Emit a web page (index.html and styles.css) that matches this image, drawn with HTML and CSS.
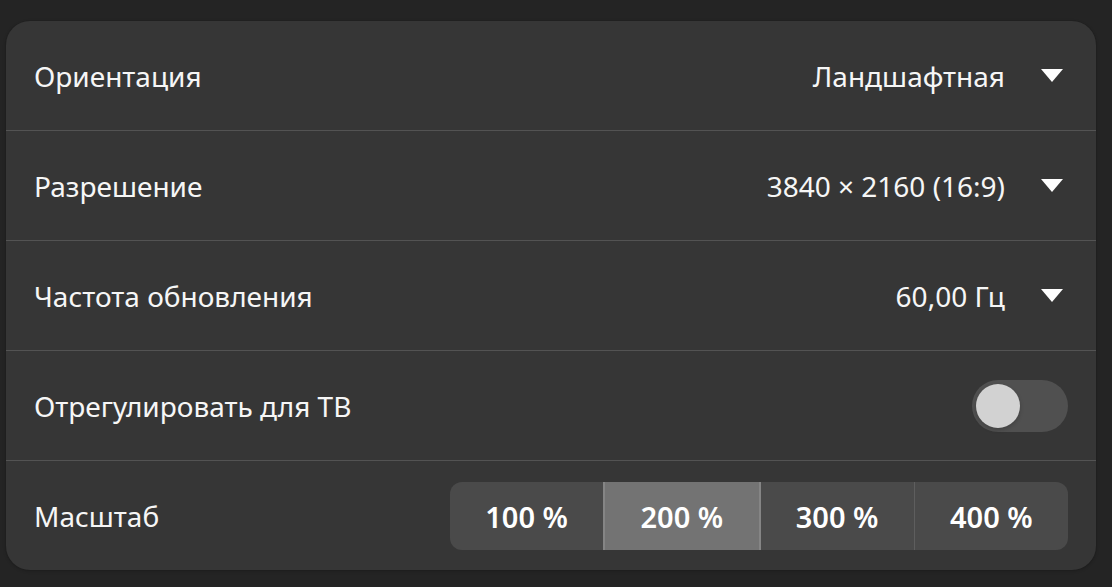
FILE: index.html
```html
<!DOCTYPE html>
<html lang="ru">
<head>
<meta charset="utf-8">
<title>Дисплей</title>
<link rel="stylesheet" href="styles.css">
</head>
<body>
<div class="page">
  <div class="card">
    <div class="row">
      <span class="label">Ориентация</span>
      <div class="combo">
        <span class="value">Ландшафтная</span>
        <svg class="arrow" width="22" height="13" viewBox="0 0 22 13"><path d="M0 0H22L11 13Z" fill="#fff"/></svg>
      </div>
    </div>
    <div class="row">
      <span class="label">Разрешение</span>
      <div class="combo">
        <span class="value">3840 × 2160 (16:9)</span>
        <svg class="arrow" width="22" height="13" viewBox="0 0 22 13"><path d="M0 0H22L11 13Z" fill="#fff"/></svg>
      </div>
    </div>
    <div class="row">
      <span class="label">Частота обновления</span>
      <div class="combo">
        <span class="value">60,00 Гц</span>
        <svg class="arrow" width="22" height="13" viewBox="0 0 22 13"><path d="M0 0H22L11 13Z" fill="#fff"/></svg>
      </div>
    </div>
    <div class="row">
      <span class="label">Отрегулировать для ТВ</span>
      <div class="switch"><div class="knob"></div></div>
    </div>
    <div class="row">
      <span class="label">Масштаб</span>
      <div class="segmented">
        <div class="seg">100 %</div>
        <div class="seg active">200 %</div>
        <div class="seg">300 %</div>
        <div class="seg">400 %</div>
      </div>
    </div>
  </div>
</div>
</body>
</html>
```

FILE: styles.css
```css
html, body {
  margin: 0;
  padding: 0;
  background: #242424;
}
body {
  font-family: "Noto Sans", "Open Sans", sans-serif;
  color: #ffffff;
}
.page {
  width: 1112px;
  height: 587px;
  box-sizing: border-box;
  padding: 21px 16px 0 6px;
}
.card {
  background: #363636;
  border-radius: 24px;
  box-shadow: 0 0 0 1px rgba(0,0,0,0.05), 0 1px 3px 1px rgba(0,0,0,0.12);
  overflow: hidden;
}
.row {
  height: 109px;
  display: flex;
  align-items: center;
  justify-content: space-between;
  padding: 0 28px 0 28px;
  border-top: 1px solid #535353;
}
.row:first-child {
  border-top: none;
}
.label {
  font-size: 28px;
  line-height: 1;
  padding-top: 1px;
  color: #f6f6f6;
}
.combo {
  display: flex;
  align-items: center;
  gap: 36px;
}
.value {
  font-size: 28px;
  line-height: 1;
  padding-top: 1px;
  color: #f6f6f6;
}
.arrow {
  display: block;
  margin-right: 5px;
}
.switch {
  width: 96px;
  height: 52px;
  border-radius: 26px;
  background: #505050;
  display: flex;
  align-items: center;
  padding-left: 4px;
  box-sizing: border-box;
}
.knob {
  width: 44px;
  height: 44px;
  border-radius: 50%;
  background: #d2d2d2;
  box-shadow: 0 2px 4px rgba(0,0,0,0.2);
}
.segmented {
  display: flex;
  width: 618px;
  height: 68px;
  border-radius: 12px;
  overflow: hidden;
  background: #4a4a4a;
}
.seg {
  flex: 1;
  display: flex;
  align-items: center;
  justify-content: center;
  font-size: 29px;
  font-weight: 600;
  border-left: 1px solid #5e5e5e;
  padding-top: 1px;
  box-sizing: border-box;
}
.seg:first-child {
  border-left: none;
}
.seg.active {
  background: #737373;
  border-left: 2px solid #858585;
  border-right: 2px solid #858585;
}
.seg.active + .seg {
  border-left: none;
}
```
